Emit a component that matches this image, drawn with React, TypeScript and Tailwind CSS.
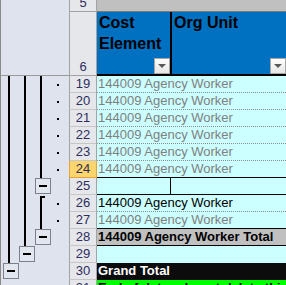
import React from "react";

type Slot = "line" | "dot" | "btn" | "bracket" | "none";

const OutSlot = ({ kind }: { kind: Slot }) => {
  return (
    <div className="w-[16px] h-full shrink-0 relative flex">
      {kind === "line" && <div className="w-[2px] h-full bg-black ml-[7px]" />}
      {kind === "dot" && (
        <div className="flex items-center h-full">
          <div className="w-[2px] h-[2px] bg-black ml-[8px]" />
        </div>
      )}
      {kind === "bracket" && (
        <div className="flex flex-col h-full ml-[7px] pt-[1px]">
          <div className="flex">
            <div className="w-[2px] h-[2px] bg-black" />
            <div className="w-[3px] h-[2px] bg-black" />
          </div>
          <div className="w-[2px] flex-1 bg-black" />
        </div>
      )}
      {kind === "btn" && (
        <div className="ml-[2px] w-[16px] h-[16px] shrink-0 border border-[#7c828c] bg-[#e2e6ee] flex items-center justify-center">
          <div className="w-[8px] h-[2px] bg-black" />
        </div>
      )}
    </div>
  );
};

type Row = {
  n: number;
  out: Slot[];
  text?: string;
  style: "grey" | "black" | "bold" | "total" | "grand" | "green" | "empty25" | "empty";
  border: "dotted" | "solid" | "none";
  selected?: boolean;
};

const rows: Row[] = [
  { n: 19, out: ["line", "line", "line", "dot"], text: "144009 Agency Worker", style: "grey", border: "dotted" },
  { n: 20, out: ["line", "line", "line", "dot"], text: "144009 Agency Worker", style: "grey", border: "dotted" },
  { n: 21, out: ["line", "line", "line", "dot"], text: "144009 Agency Worker", style: "grey", border: "dotted" },
  { n: 22, out: ["line", "line", "line", "dot"], text: "144009 Agency Worker", style: "grey", border: "dotted" },
  { n: 23, out: ["line", "line", "line", "dot"], text: "144009 Agency Worker", style: "grey", border: "dotted" },
  { n: 24, out: ["line", "line", "line", "dot"], text: "144009 Agency Worker", style: "grey", border: "solid", selected: true },
  { n: 25, out: ["line", "line", "btn", "none"], style: "empty25", border: "solid" },
  { n: 26, out: ["line", "line", "bracket", "dot"], text: "144009 Agency Worker", style: "black", border: "dotted" },
  { n: 27, out: ["line", "line", "line", "dot"], text: "144009 Agency Worker", style: "grey", border: "solid" },
  { n: 28, out: ["line", "line", "btn", "none"], text: "144009 Agency Worker Total", style: "total", border: "solid" },
  { n: 29, out: ["line", "btn", "none", "none"], style: "empty", border: "none" },
  { n: 30, out: ["btn", "none", "none", "none"], text: "Grand Total", style: "grand", border: "none" },
  { n: 31, out: ["none", "none", "none", "none"], text: "End of data - do not delete this row", style: "green", border: "none" },
];

const FilterBtn = () => (
  <div className="w-[16px] h-[16px] shrink-0 border border-[#a6a6a6] bg-gradient-to-b from-[#ffffff] to-[#e6e6e6] flex items-center justify-center">
    <div className="w-0 h-0 border-l-[4px] border-r-[4px] border-t-[4px] border-l-transparent border-r-transparent border-t-[#5a5a5a]" />
  </div>
);

export default function App() {
  return (
    <div
      className="w-[286px] h-[285px] overflow-hidden bg-white text-[13px]"
      style={{ fontFamily: '"Liberation Sans", Arial, sans-serif' }}
    >
      {/* Row 5 */}
      <div className="flex h-[12px]">
        <div className="w-[69px] h-full shrink-0 bg-[#dee3ed] border-l border-[#8a8a8a]" />
        <div className="w-[28px] h-full shrink-0 bg-[#e6e7ea] border-l border-r border-b border-l-[#a3a3a3] border-r-[#a3a3a3] border-b-[#a3a3a3] overflow-hidden">
          <div className="h-[16px] mt-[-5px] leading-[16px] text-center text-[#2d2d5f]">5</div>
        </div>
        <div className="flex-1 h-full bg-[#c0c0c0] border-b border-[#7a7a7a]" />
      </div>
      {/* Row 6 header */}
      <div className="flex h-[64px]">
        <div className="w-[69px] h-full shrink-0 bg-[#dee3ed] border-l border-b border-l-[#8a8a8a] border-b-[#9a9a9a]" />
        <div className="w-[28px] h-full shrink-0 bg-[#e6e7ea] border-l border-r border-b border-[#a3a3a3] flex items-end justify-center">
          <div className="leading-[16px] text-[#2d2d5f]">6</div>
        </div>
        <div className="flex-1 h-full flex border-b-2 border-black">
          <div className="w-[75px] shrink-0 h-full bg-[#0070c0] border-r-2 border-black flex flex-col justify-between">
            <div className="pl-[2px] text-[16px] leading-[21px] font-bold text-black pt-[0px]">
              Cost
              <br />
              Element
            </div>
            <div className="self-end">
              <FilterBtn />
            </div>
          </div>
          <div className="flex-1 h-full bg-[#0070c0] flex flex-col justify-between">
            <div className="pl-[2px] text-[16px] leading-[21px] font-bold text-black whitespace-nowrap">Org Unit</div>
            <div className="self-end">
              <FilterBtn />
            </div>
          </div>
        </div>
      </div>
      {/* Data rows */}
      {rows.map((r) => {
        const cellBorder =
          r.border === "dotted"
            ? "border-b border-dotted border-[#8c8c8c]"
            : r.border === "solid"
            ? "border-b border-black"
            : "";
        const bg =
          r.style === "total"
            ? "bg-[#c0c0c0]"
            : r.style === "grand"
            ? "bg-[#0c0c0c]"
            : r.style === "green"
            ? "bg-[#00ff00]"
            : "bg-[#ccffff]";
        const textCls =
          r.style === "grey"
            ? "text-[#808080]"
            : r.style === "black"
            ? "text-black"
            : r.style === "total"
            ? "text-black font-bold"
            : r.style === "grand"
            ? "text-white font-bold"
            : "text-black font-bold";
        return (
          <div key={r.n} className="flex h-[17px]">
            <div className="w-[69px] h-full shrink-0 bg-[#dee3ed] border-l border-[#8a8a8a] flex">
              {r.out.map((s, i) => (
                <OutSlot key={i} kind={s} />
              ))}
            </div>
            <div
              className={
                r.selected
                  ? "w-[28px] h-full shrink-0 bg-[#fcd66c] border border-t-0 border-[#e9a13a] flex items-center justify-center"
                  : "w-[28px] h-full shrink-0 bg-[#e6e7ea] border-l border-r border-b border-l-[#a3a3a3] border-r-[#a3a3a3] border-b-[#c6c6c6] flex items-center justify-center"
              }
            >
              <span className="leading-[16px] text-[#2d2d5f]">{r.n}</span>
            </div>
            <div className={`flex-1 h-full flex ${bg} ${cellBorder}`}>
              <div
                className={
                  r.style === "empty25"
                    ? "w-[74px] shrink-0 h-full border-r border-black"
                    : "w-[74px] shrink-0 h-full"
                }
              >
                {r.text && (
                  <div className={`pl-[1px] leading-[16px] whitespace-nowrap ${textCls}`}>{r.text}</div>
                )}
              </div>
              <div className="flex-1 h-full" />
            </div>
          </div>
        );
      })}
    </div>
  );
}
